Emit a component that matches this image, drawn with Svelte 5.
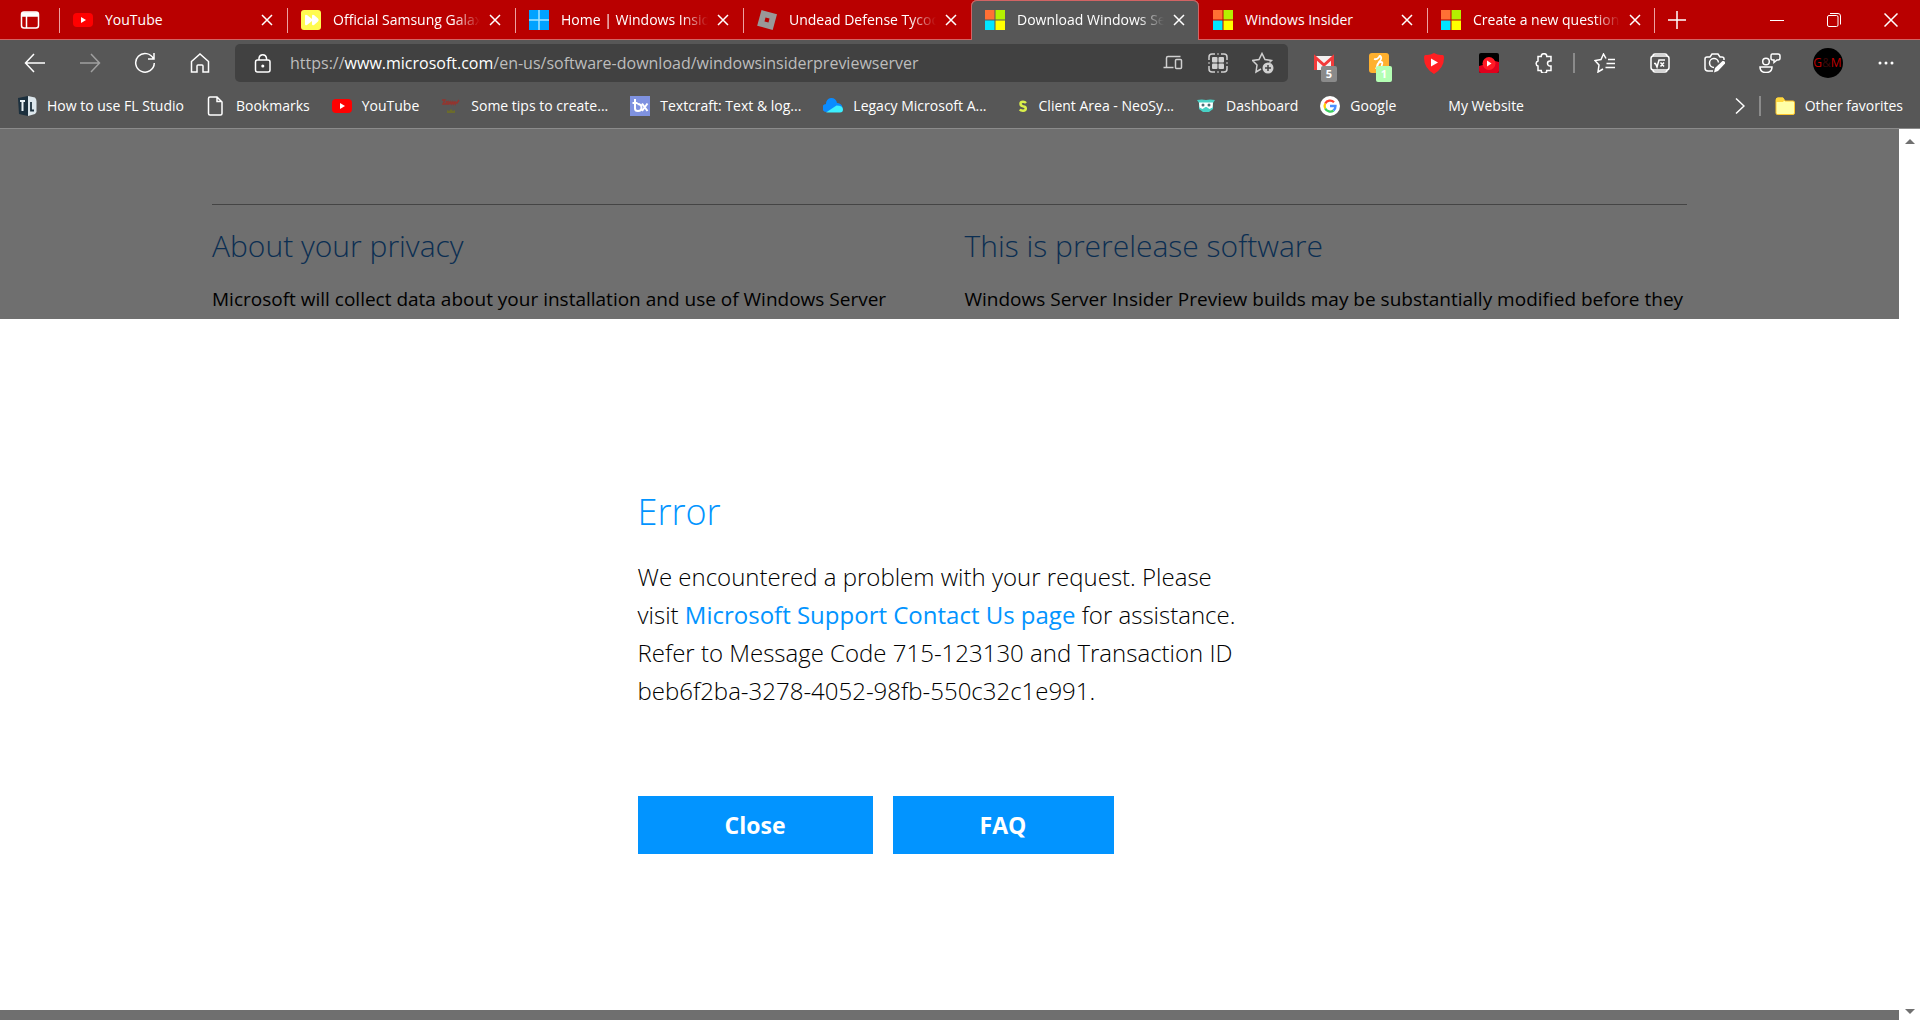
<script lang="ts">
interface Tab {
  title: string;
  icon: string;
  active?: boolean;
  clipped?: boolean;
}

const tabs: Tab[] = [
  { title: 'YouTube', icon: 'youtube' },
  { title: 'Official Samsung Galaxy', icon: 'samsung', clipped: true },
  { title: 'Home | Windows Insider', icon: 'windows', clipped: true },
  { title: 'Undead Defense Tycoon', icon: 'roblox', clipped: true },
  { title: 'Download Windows Server', icon: 'microsoft', active: true, clipped: true },
  { title: 'Windows Insider', icon: 'microsoft' },
  { title: 'Create a new question', icon: 'microsoft', clipped: true },
];

const bookmarks = [
  { title: 'How to use FL Studio', icon: 'fl' },
  { title: 'Bookmarks', icon: 'page' },
  { title: 'YouTube', icon: 'youtube' },
  { title: 'Some tips to create...', icon: 'scratch' },
  { title: 'Textcraft: Text & log...', icon: 'textcraft' },
  { title: 'Legacy Microsoft A...', icon: 'onedrive' },
  { title: 'Client Area - NeoSy...', icon: 'neosys' },
  { title: 'Dashboard', icon: 'dashboard' },
  { title: 'Google', icon: 'google' },
  { title: 'My Website', icon: 'blank' },
];

let showError = $state(true);
</script>

{#snippet favicon(name: string)}
  <svg class="favicon" viewBox="0 0 20 20" aria-hidden="true">
    {#if name === 'youtube'}
      <rect y="3" width="20" height="14" rx="4" fill="#f00" />
      <path d="M8 7v6l5-3z" fill="#fff" />
    {:else if name === 'samsung'}
      <rect width="20" height="20" rx="3" fill="#fffb50" />
      <path d="M4 6q0-2 2-1l5 4V6q0-2 2-1l4 3.500q1.500 1.500 0 3L13 15q-2 1-2-1v-3l-5 4q-2 1-2-1z" fill="#fff" />
    {:else if name === 'windows'}
      <path d="M0 0h20v20H0z" fill="#00a2ff" />
      <path d="M10 0v20M0 10h20" stroke="#a5e2ff" stroke-width="1.500" />
    {:else if name === 'roblox'}
      <path d="M4.500 0L20 4.300 15.700 20 .200 15.700z" fill="#999" />
      <path d="M8.500 7.500l4 1-1 4-4-1z" fill="#b90000" />
    {:else if name === 'microsoft'}
      <path d="M0 0h9.500v9.500H0z" fill="#ff7034" />
      <path d="M10.500 0H20v9.500h-9.500z" fill="#b4f000" />
      <path d="M0 10.500h9.500V20H0z" fill="#00e5ff" />
      <path d="M10.500 10.500H20V20h-9.500z" fill="#ff0" />
    {:else if name === 'fl'}
      <path d="M1 2l10-2v20L2 18z" fill="#1c303e" />
      <path d="M11 0l7 1.500q1.500 1.500 1.500 4V16L18 18l-7 2z" fill="#dce6ec" />
      <path d="M3 5h5M5.500 5v10" fill="none" stroke="#e8f0f4" stroke-width="2" />
      <path d="M14 6v8.500h3" fill="none" stroke="#1c303e" stroke-width="1.800" />
    {:else if name === 'page'}
      <path d="M4 1h7l5 5v11.500a1.500 1.500 0 0 1-1.500 1.500H4a1.500 1.500 0 0 1-1.500-1.500v-15A1.500 1.500 0 0 1 4 1zM11 1v4.500h5" fill="none" stroke="#fff" stroke-width="1.500" />
    {:else if name === 'scratch'}
      <path d="M1 4h3L2 8h3l1-3v3h2V6l2 2V6l2 2V6l2 2V6l2 1 2-3" fill="none" stroke="#93352f" stroke-width="1.500" />
      <path d="M6 17v-3l2 1 2-2 2 2 2-1v3z" fill="#6b6b2b" />
    {:else if name === 'textcraft'}
      <rect width="20" height="20" fill="#7f92e0" />
      <path d="M5 3v9.500Q5 15 8 15q3.500 0 3.500-3.500T7.500 8M2.500 7h5M12 7.500l5.500 7.500M17.500 7.500L12 15" fill="none" stroke="#fff" stroke-width="2" />
    {:else if name === 'onedrive'}
      <path d="M4 16a4 4 0 0 1-1-8 5.500 5.500 0 0 1 11-1 5 5 0 0 1 5 7z" fill="#0a8bff" />
      <path d="M3 16.500L13.500 9.500q6.500 0 6.500 4a3 3 0 0 1-3 3z" fill="#3cf0ff" />
    {:else if name === 'neosys'}
      <path d="M17 7q-1-1.200-3-1.200-2.500 0-2.500 2t2.500 2.400q2.800.300 2.800 2.400t-2.800 2.100q-2.200 0-3.200-1.200" fill="none" stroke="#dbf04a" stroke-width="2.500" />
    {:else if name === 'dashboard'}
      <path d="M1 4q5-1 9 0 4-1 9 0l-2 3v6l-4 3H7l-4-3V7z" fill="#48d1c5" />
      <path d="M3 6.500h14l-.5 5-3 1.500-3-2h-1l-3 2-3-1.500z" fill="#fff" />
      <circle cx="7" cy="9" r="1.500" fill="#4a6f75" />
      <circle cx="13" cy="9" r="1.500" fill="#4a6f75" />
    {:else if name === 'google'}
      <circle cx="10" cy="10" r="10" fill="#fff" />
      <g fill="none" stroke-width="2.300">
        <path d="M14 6.200A5.500 5.500 0 0 0 5.200 7.500" stroke="#ff4131" />
        <path d="M5.200 7.500a5.500 5.500 0 0 0 0 5" stroke="#ffd000" />
        <path d="M5.200 12.500a5.500 5.500 0 0 0 8.300 2" stroke="#3ccf5f" />
        <path d="M13.500 14.500a5.500 5.500 0 0 0 2-4.500H10" stroke="#4a8fff" />
      </g>
    {:else if name === 'folder'}
      <path d="M1 4q0-2 2-2h5l2 3h8q1.500 0 1.500 1.500V17q0 1.500-1.500 1.500H2.500Q1 18.500 1 17z" fill="#ffffa8" stroke="#ffc52b" />
      <path d="M1 3q0-1.500 2-1.500h5L9.500 4 8 6H1z" fill="#ffd83d" />
    {/if}
  </svg>
{/snippet}

{#snippet cross()}
  <svg class="cross" viewBox="0 0 12 12" aria-hidden="true"><path d="M1 1l10 10M11 1L1 11" /></svg>
{/snippet}

<div class="browser">
  <header class="tab-strip">
    <button class="tab-actions" aria-label="Tab actions menu">
      <svg class="line" width="20" height="20" viewBox="0 0 20 20">
        <rect x="1.500" y="2" width="17" height="16" rx="2.500" />
        <path d="M2 3.500h16M2 5.500h16" stroke-width="2.500" />
        <path d="M6.500 6v12" />
      </svg>
    </button>
    <div class="tabs" role="tablist">
      {#each tabs as tab}
        <div class="tab" class:active={tab.active}>
          {@render favicon(tab.icon)}
          <span class="tab-title" class:clipped={tab.clipped} role="tab" aria-selected={!!tab.active}>{tab.title}</span>
          <button class="tab-close" aria-label="Close tab">{@render cross()}</button>
        </div>
      {/each}
    </div>
    <button class="new-tab" aria-label="New tab">
      <svg class="line" width="18" height="18" viewBox="0 0 18 18"><path d="M9 0v18M0 9h18" /></svg>
    </button>
    <div class="window-buttons">
      <button aria-label="Minimize">
        <svg class="line thin" width="14" height="14" viewBox="0 0 14 14"><path d="M0 7.500h14" /></svg>
      </button>
      <button aria-label="Restore">
        <svg class="line thin" width="14" height="14" viewBox="0 0 14 14">
          <rect x=".5" y="2.500" width="10.500" height="11" rx="1.500" /><path d="M3 .5h8q2.500 0 2.500 2.500v8.500" />
        </svg>
      </button>
      <button aria-label="Close">
        <svg class="line" width="14" height="14" viewBox="0 0 14 14"><path d="M.5 .5l13 13M13.500 .5l-13 13" /></svg>
      </button>
    </div>
  </header>

  <nav class="toolbar" aria-label="Toolbar">
    <button class="tool" aria-label="Back">
      <svg class="line" width="22" height="20" viewBox="0 0 22 20"><path d="M10 1L1.500 10l8.500 9M1.500 10H21" /></svg>
    </button>
    <button class="tool dim" aria-label="Forward">
      <svg class="line" width="22" height="20" viewBox="0 0 22 20"><path d="M12 1l8.500 9-8.500 9M20.500 10H1" /></svg>
    </button>
    <button class="tool" aria-label="Refresh">
      <svg class="line" width="22" height="22" viewBox="0 0 22 22"><path d="M19.500 7A9.300 9.300 0 1 0 20.300 11M20 1v6h-6" /></svg>
    </button>
    <button class="tool" aria-label="Home">
      <svg class="line" width="20" height="20" viewBox="0 0 20 20">
        <path d="M1.500 8.500L10 1l8.500 7.500V19H13v-6q0-1-1-1H8q-1 0-1 1v6H1.500z" />
      </svg>
    </button>

    <div class="address">
      <svg class="line" width="18" height="20" viewBox="0 0 18 20">
        <rect x="1.500" y="7" width="14.500" height="12" rx="2" /><path d="M5 7V5a3.800 3.800 0 0 1 7.500 0v2" />
        <circle cx="8.800" cy="13" r=".8" />
      </svg>
      <a class="url" href="https://www.microsoft.com/en-us/software-download/windowsinsiderpreviewserver"
        >https://<b>www.microsoft.com</b>/en-us/software-download/windowsinsiderpreviewserver</a>
      <div class="address-tools">
        <button aria-label="Send this page">
          <svg class="line" width="20" height="16" viewBox="0 0 20 16">
            <path d="M3.500 12V3q0-1.500 1.500-1.500h12.500M.5 12.500h10" /><rect x="12.500" y="4.500" width="6" height="9" rx="1" />
          </svg>
        </button>
        <button aria-label="Apps">
          <svg class="line" width="20" height="20" viewBox="0 0 20 20">
            <path d="M1 7V4q0-3 3-3h3M13 1h3q3 0 3 3v3M19 13v3q0 3-3 3h-3M7 19H4q-3 0-3-3v-3" />
            <path d="M1 9v2M19 9v2M9 1h2M9 19h2" stroke-width="1" />
            <g fill="currentColor" stroke="none">
              <rect x="4" y="4" width="5.500" height="5.500" rx="1" /><rect x="10.500" y="4" width="5.500" height="5.500" rx="1" />
              <rect x="4" y="10.500" width="5.500" height="5.500" rx="1" /><rect x="10.500" y="10.500" width="5.500" height="5.500" rx="1" />
            </g>
          </svg>
        </button>
        <button aria-label="Add to favorites">
          <svg class="line" width="22" height="22" viewBox="0 0 22 22">
            <path d="M9 17l-5 3 1-7-4.500-4.500 6.500-1L10 1.500l3 6 6.500 1-2 2" />
            <circle cx="16" cy="16" r="5.500" fill="currentColor" stroke="none" />
            <path d="M16 13v6M13 16h6" stroke="#414141" />
          </svg>
        </button>
      </div>
    </div>

    <button class="tool" aria-label="Gmail, 5 unread">
      <svg width="20" height="20" viewBox="0 0 20 20">
        <path d="M0 3h20v14H0z" fill="#f4f0f0" /><path d="M1.500 17V4.500L10 12l8.500-7.500V17" fill="none" stroke="#f23a3a" stroke-width="3" />
      </svg>
      <span class="badge">5</span>
    </button>
    <button class="tool" aria-label="Coupons, 1 found">
      <svg width="20" height="20" viewBox="0 0 20 20">
        <rect width="20" height="20" rx="3" fill="#ffb02e" />
        <path d="M5 6q3 1 5-2 1-2 2 0t-2 5l-3 7M8 13q1-4 4-4 2 0 1 2.500t1 2.500" fill="none" stroke="#fff" stroke-width="1.800" />
      </svg>
      <span class="badge green">1</span>
    </button>
    <button class="tool" aria-label="Video shield">
      <svg width="20" height="21" viewBox="0 0 20 21">
        <path d="M10 0q4 2.500 8.500 2Q20 2 20 5q0 10-10 16Q0 15 0 5 0 2 1.500 2 6 2.500 10 0z" fill="#ff1f22" /><path d="M7 5.500v8l7-4z" fill="#fff" />
      </svg>
    </button>
    <button class="tool" aria-label="Video player">
      <svg width="20" height="20" viewBox="0 0 20 20">
        <rect width="20" height="20" rx="2" /><path d="M0 13q5-1 8-4t12 0v9q0 2-2 2H2q-2 0-2-2z" fill="#e0001c" />
        <circle cx="10" cy="10.500" r="6.500" fill="#ff1a25" /><path d="M8 7.500v6l4.500-3z" fill="#fff" />
      </svg>
    </button>
    <button class="tool" aria-label="Extensions">
      <svg class="line" width="20" height="20" viewBox="0 0 20 20">
        <path d="M4 3.500h3.200a2.800 2.800 0 0 1 5.600 0H17V8h-1a2.300 2.300 0 0 0 0 5h1v4.500h-4.200a2.800 2.800 0 0 1-5.600 0H4V13a2.600 2.600 0 0 1 0-5z" />
      </svg>
    </button>
    <span class="rule"></span>
    <button class="tool" aria-label="Favorites">
      <svg class="line" width="22" height="20" viewBox="0 0 22 20">
        <path d="M12 5.500L9.500 1 7 6.500l-6 1 4 4.500-1 7 5-3M14 6.500h7M12.500 10.500H21M11.500 14.500H21" />
      </svg>
    </button>
    <button class="tool" aria-label="Math solver">
      <svg class="line" width="20" height="20" viewBox="0 0 20 20">
        <rect x="1" y="3" width="18" height="14" rx="2.500" />
        <path d="M3 3q0-2 2-2h10q2 0 2 2M3 17q0 2 2 2h10q2 0 2-2M4 10.500h1.500L7 14l2-7h6M10.500 9.500l3.500 4M14 9.500l-3.500 4" />
      </svg>
    </button>
    <button class="tool" aria-label="Web capture">
      <svg class="line" width="22" height="20" viewBox="0 0 22 20">
        <path d="M9 18H4q-3 0-3-3V6q0-2 2-2h3l2-3h6l2 3h2q2 0 2 2v1" />
        <path d="M10 14.500a4.500 4.500 0 1 1 4.500-5" />
        <path d="M10 19.500l1-4.500 7.500-7q3-.5 2.500 2.500L14 18z" fill="currentColor" stroke="none" />
      </svg>
    </button>
    <button class="tool" aria-label="Feedback">
      <svg class="line" width="22" height="20" viewBox="0 0 22 20">
        <circle cx="7" cy="8.500" r="3.300" /><path d="M1 14h12q0 5.500-6 5.500T1 14zM13 1h6q2 0 2 2v2q0 2-2 2h-1l-3 2.500V7h-1.500q-1.500 0-1.500-2V3q0-2 1-2z" />
      </svg>
    </button>
    <button class="tool profile" aria-label="Profile"><span class="avatar">G<i>&amp;</i>M</span></button>
    <button class="tool" aria-label="Settings and more">
      <svg width="16" height="4" viewBox="0 0 16 4" fill="#fff"><circle cx="2" cy="2" r="1.500" /><circle cx="8" cy="2" r="1.500" /><circle cx="14" cy="2" r="1.500" /></svg>
    </button>
  </nav>

  <nav class="bookmarks" aria-label="Favorites bar">
    {#each bookmarks as bookmark}
      <a href="#bookmark">{@render favicon(bookmark.icon)}<span>{bookmark.title}</span></a>
    {/each}
    <div class="bookmarks-end">
      <button aria-label="More favorites">
        <svg class="line" width="10" height="16" viewBox="0 0 10 16"><path d="M1 .5L9 8l-8 7.500" /></svg>
      </button>
      <span class="rule"></span>
      <a href="#other">{@render favicon('folder')}<span>Other favorites</span></a>
    </div>
  </nav>

  <div class="viewport">
    <main class="page">
      <div class="terms">
        <section>
          <h2>About your privacy</h2>
          <p>Microsoft will collect data about your installation and use of Windows Server</p>
        </section>
        <section>
          <h2>This is prerelease software</h2>
          <p>Windows Server Insider Preview builds may be substantially modified before they</p>
        </section>
      </div>

      {#if showError}
        <div class="modal" role="dialog" aria-labelledby="error-title">
          <div class="modal-content">
            <h1 id="error-title">Error</h1>
            <p>
              We encountered a problem with your request. Please<br />
              visit <a href="#support">Microsoft Support Contact Us page</a> for assistance.<br />
              Refer to Message Code 715-123130 and Transaction ID<br />
              beb6f2ba-3278-4052-98fb-550c32c1e991.
            </p>
            <div class="actions">
              <button onclick={() => (showError = false)}>Close</button>
              <button class="faq">FAQ</button>
            </div>
          </div>
        </div>
      {/if}
    </main>
    <div class="scrollbar" aria-hidden="true">
      <svg width="10" height="5" viewBox="0 0 10 5"><path d="M0 5l5-5 5 5z" /></svg>
      <svg width="10" height="5" viewBox="0 0 10 5"><path d="M0 0l5 5 5-5z" /></svg>
    </div>
  </div>
</div>

<style>
  :global(body) { margin: 0; }
  .browser {
    --red: #b90000;
    --chrome: #575757;
    --edge: #d26464;
    height: 100vh;
    display: flex;
    flex-direction: column;
    overflow: hidden;
    background: var(--chrome);
    color: #fff;
    font: 14px 'Open Sans', 'Segoe UI', sans-serif;
  }
  .browser * { box-sizing: border-box; }
  button {
    padding: 0;
    border: 0;
    background: none;
    color: inherit;
    font: inherit;
    display: flex;
    align-items: center;
    justify-content: center;
  }
  a { color: inherit; text-decoration: none; }
  svg { display: block; flex-shrink: 0; }
  .line { fill: none; stroke: currentColor; stroke-width: 1.5; }
  .thin { stroke-width: 1; }
  .favicon { width: 20px; height: 20px; }
  .rule { width: 2px; height: 20px; background: #8b8b8b; flex-shrink: 0; }

  .tab-strip {
    height: 40px;
    flex-shrink: 0;
    display: flex;
    padding-right: 1px;
    background: var(--red);
    box-shadow: inset 0 -1px var(--edge);
  }
  .tab-actions { width: 59px; }
  .tabs { flex: 1; display: flex; min-width: 0; }
  .tab {
    position: relative;
    flex: 1;
    min-width: 0;
    display: flex;
    align-items: center;
    padding: 0 10px 0 14px;
  }
  .tab::before, .tab:last-child::after {
    content: '';
    position: absolute;
    left: 0;
    top: 8px;
    width: 1px;
    height: 25px;
    background: #eda0a0;
  }
  .tab:last-child::after { left: auto; right: 0; }
  .tab.active {
    background: var(--chrome);
    border-radius: 6px 6px 0 0;
    box-shadow: inset 1px 0 var(--edge), inset -1px 0 var(--edge), inset 0 1px var(--edge);
  }
  .tab.active::before, .tab.active + .tab::before { display: none; }
  .tab-title {
    flex: 1;
    min-width: 0;
    margin: 0 5px 0 12px;
    padding-bottom: 2px;
    overflow: hidden;
    white-space: nowrap;
  }
  .tab-title.clipped { mask-image: linear-gradient(to right, #000 calc(100% - 26px), transparent); }
  .tab-close { width: 20px; height: 20px; }
  .cross { width: 12px; height: 12px; stroke: #fff; stroke-width: 1.5; }
  .new-tab { width: 44px; }
  .window-buttons { display: flex; margin-left: 49px; }
  .window-buttons button { width: 57px; }

  .toolbar { height: 46px; flex-shrink: 0; display: flex; align-items: center; padding: 0 7px; }
  .tool { position: relative; width: 55px; height: 40px; flex-shrink: 0; }
  .dim { color: #a0a0a0; }
  .toolbar > .rule { margin: 0 2px; }
  .address {
    flex: 1;
    min-width: 0;
    height: 38px;
    margin: 0 8px;
    padding: 0 3px 0 19px;
    display: flex;
    align-items: center;
    gap: 18px;
    border-radius: 5px;
    background: #414141;
  }
  .url { flex: 1; min-width: 0; overflow: hidden; white-space: nowrap; font-size: 16px; color: #bdbdbd; }
  .url b { font-weight: 400; color: #fff; }
  .address-tools { display: flex; color: #d0d0d0; }
  .address-tools button { width: 45px; height: 38px; }
  .badge {
    position: absolute;
    left: 25px;
    top: 23px;
    width: 16px;
    height: 16px;
    border-radius: 2px;
    background: #8a8a8a;
    font: bold 11px/16px 'Open Sans', sans-serif;
  }
  .badge.green { background: #b4ffb4; }
  .profile { width: 61px; }
  .avatar {
    width: 30px;
    height: 30px;
    border-radius: 50%;
    background: #000;
    color: #c00000;
    font-size: 12px;
    line-height: 30px;
  }
  .avatar i { color: #3a0808; font-style: normal; }

  .bookmarks {
    height: 43px;
    flex-shrink: 0;
    display: flex;
    align-items: center;
    gap: 22px;
    padding: 0 17px 2px;
    border-bottom: 1px solid #8b8b8b;
    white-space: nowrap;
  }
  .bookmarks a { display: flex; align-items: center; gap: 10px; }
  .bookmarks a span { padding-bottom: 2px; }
  .bookmarks-end { margin-left: auto; display: flex; align-items: center; gap: 14px; }

  .viewport { flex: 1; min-height: 0; display: flex; }
  .page { position: relative; flex: 1; min-width: 0; background: #6f6f6f; overflow: hidden; }
  .terms {
    margin: 75px 212px 0;
    border-top: 1px solid #444;
    display: grid;
    grid-template-columns: 1fr 1fr;
    gap: 30px;
    color: #000;
  }
  .terms h2 { margin: 19px 0 0; color: #0b2e52; font-size: 30px; font-weight: 300; line-height: 44px; }
  .terms p { margin: 16px 0 0; font-size: 19px; line-height: 30px; white-space: nowrap; }
  .modal {
    position: absolute;
    inset: 190px 0 10px;
    padding-top: 168px;
    background: #fff;
    color: #000;
  }
  .modal-content { max-width: 624px; margin: 0 auto; }
  h1 { margin: 0; color: #0294ff; font-size: 36px; font-weight: 300; line-height: 50px; }
  .modal p { margin: 21px 0 0; font-size: 24px; font-weight: 350; line-height: 38px; white-space: nowrap; }
  .modal p a { color: #0294ff; font-weight: 450; }
  .actions { display: flex; gap: 20px; margin-top: 86px; }
  .actions button {
    width: 235px;
    height: 58px;
    background: #0294ff;
    color: #fff;
    font-size: 23px;
    font-weight: 700;
  }
  .actions .faq { width: 221px; }
  .scrollbar {
    width: 21px;
    padding: 10px 0 6px;
    display: flex;
    flex-direction: column;
    align-items: center;
    justify-content: space-between;
    background: #fff;
    fill: #707070;
  }
</style>
